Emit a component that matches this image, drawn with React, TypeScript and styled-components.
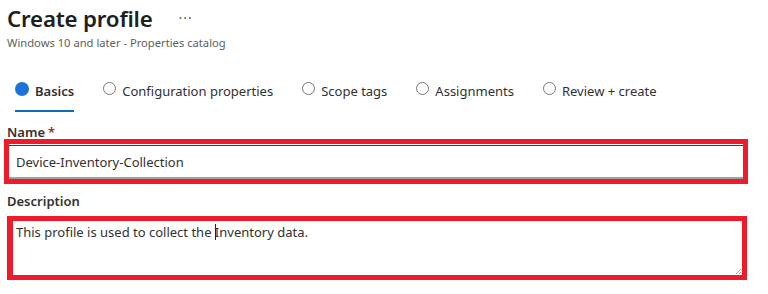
import React from "react";
import styled, { createGlobalStyle } from "styled-components";

const Global = createGlobalStyle`
  html, body { margin: 0; padding: 0; background: #ffffff; }
  body { font-family: "Noto Sans", "Open Sans", sans-serif; color: #323130; }
  * { box-sizing: border-box; }
`;

const Page = styled.div`
  width: 768px;
  height: 294px;
  overflow: hidden;
  background: #fff;
  display: flex;
  flex-direction: column;
`;

const Header = styled.div`
  padding: 2px 0 0 7px;
  display: flex;
  flex-direction: column;
`;

const TitleRow = styled.div`
  display: flex;
  align-items: center;
  gap: 26px;
  height: 34px;
`;

const Title = styled.h1`
  margin: 0;
  font-size: 22.3px;
  font-weight: 600;
  line-height: 34px;
  color: #201f1e;
  letter-spacing: -0.2px;
`;

const More = styled.span`
  font-size: 14px;
  color: #605e5c;
  letter-spacing: 1px;
  line-height: 14px;
  margin-top: -2px;
`;

const Subtitle = styled.div`
  font-size: 11.2px;
  line-height: 16px;
  color: #605e5c;
  margin-top: -1px;
`;

const Tabs = styled.div`
  display: flex;
  align-items: stretch;
  margin: 27px 0 0 15px;
  height: 34px;
`;

const Tab = styled.div<{ $active?: boolean; $gap: number }>`
  display: flex;
  align-items: flex-start;
  gap: ${(p) => p.$gap}px;
  height: 34px;
  padding-top: 4px;
  margin-right: 29px;
  font-size: 13px;
  line-height: 18px;
  color: #323130;
  font-weight: ${(p) => (p.$active ? 600 : 400)};
  border-bottom: 2px solid ${(p) => (p.$active ? "#0f6cbd" : "transparent")};
`;

const Dot = styled.span<{ $active?: boolean }>`
  width: ${(p) => (p.$active ? 14 : 13)}px;
  height: ${(p) => (p.$active ? 14 : 13)}px;
  border-radius: 50%;
  margin-top: 0;
  flex: none;
  background: ${(p) => (p.$active ? "#1a73d9" : "#fff")};
  border: ${(p) => (p.$active ? "none" : "1.5px solid #797775")};
`;

const Form = styled.div`
  display: flex;
  flex-direction: column;
  padding: 0 0 0 4px;
`;

const Label = styled.div<{ $top: number }>`
  margin: ${(p) => p.$top}px 0 0 3px;
  font-size: 13px;
  font-weight: 600;
  line-height: 14px;
  color: #323130;
`;

const Star = styled.span`
  color: #a4262c;
  margin-left: 3px;
`;

const Highlight = styled.div<{ $width: number; $height: number; $top: number }>`
  margin-top: ${(p) => p.$top}px;
  width: ${(p) => p.$width}px;
  height: ${(p) => p.$height}px;
  border: 5px solid #ee1c2a;
  display: flex;
  flex-direction: column;
`;

const TextInput = styled.div`
  margin-top: 1px;
  height: 34px;
  border-top: 1px solid #3b3a39;
  border-bottom: 2px solid #a19f9d;
  padding: 0 0 0 7px;
  display: flex;
  align-items: center;
  font-size: 13px;
  color: #323130;
`;

const TextArea = styled.div`
  position: relative;
  flex: 1;
  padding: 1px 0 0 3px;
  font-size: 13px;
  line-height: 20px;
  color: #323130;
`;

const Caret = styled.span`
  display: inline-block;
  width: 1px;
  height: 16px;
  background: #201f1e;
  vertical-align: -3px;
  margin-right: -1px;
`;

const Grip = styled.svg`
  position: absolute;
  right: 0;
  bottom: 0;
`;

const FocusBar = styled.div`
  width: 1px;
  background: #2b5fb4;
  height: 64px;
`;

const DescRow = styled.div`
  display: flex;
  margin-left: 3px;
  margin-top: 8px;
`;

const tabs = [
  { label: "Basics", active: true, gap: 6 },
  { label: "Configuration properties", gap: 6 },
  { label: "Scope tags", gap: 6 },
  { label: "Assignments", gap: 6 },
  { label: "Review + create", gap: 6 },
];

export default function App() {
  return (
    <Page>
      <Global />
      <Header>
        <TitleRow>
          <Title>Create profile</Title>
          <More>···</More>
        </TitleRow>
        <Subtitle>Windows 10 and later - Properties catalog</Subtitle>
      </Header>
      <Tabs>
        {tabs.map((t) => (
          <Tab key={t.label} $active={t.active} $gap={t.gap}>
            <Dot $active={t.active} />
            {t.label}
          </Tab>
        ))}
      </Tabs>
      <Form>
        <Label $top={13}>
          Name<Star>*</Star>
        </Label>
        <Highlight $width={744} $height={45} $top={0}>
          <TextInput>Device-Inventory-Collection</TextInput>
        </Highlight>
        <Label $top={10}>Description</Label>
        <DescRow>
          <FocusBar />
          <Highlight $width={739} $height={64} $top={0}>
            <TextArea>
              This profile is used to collect the <Caret />Inventory data.
              <Grip width="7" height="7" viewBox="0 0 7 7">
                <path d="M6 1 L1 6 M6 4 L4 6" stroke="#a19f9d" strokeWidth="1" />
              </Grip>
            </TextArea>
          </Highlight>
        </DescRow>
      </Form>
    </Page>
  );
}
